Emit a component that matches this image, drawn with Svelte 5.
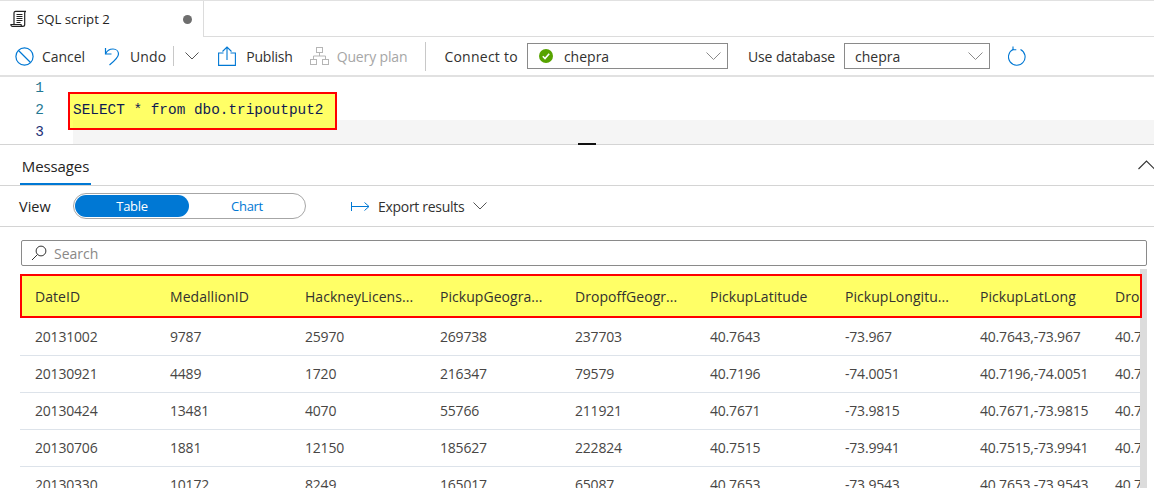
<script>
  const cols = ['DateID','MedallionID','HackneyLicens...','PickupGeogra...','DropoffGeogr...','PickupLatitude','PickupLongitu...','PickupLatLong','Dro'];
  const rows = [
    ['20131002','9787','25970','269738','237703','40.7643','-73.967','40.7643,-73.967','40.7'],
    ['20130921','4489','1720','216347','79579','40.7196','-74.0051','40.7196,-74.0051','40.7'],
    ['20130424','13481','4070','55766','211921','40.7671','-73.9815','40.7671,-73.9815','40.7'],
    ['20130706','1881','12150','185627','222824','40.7515','-73.9941','40.7515,-73.9941','40.7'],
    ['20130330','10172','8249','165017','65087','40.7653','-73.9543','40.7653,-73.9543','40.7']
  ];
</script>

<div class="page">
  <div class="tabbar">
    <div class="tab">
      <svg class="scroll" width="18" height="18" viewBox="0 0 18 18" fill="none" stroke="#222" stroke-width="1.200">
        <path d="M4 14V3c0-1 .6-1.6 1.6-1.6H16c-.8 0-1.3.6-1.3 1.6v11.5c0 1.1-.8 1.9-2 1.9H2.500c-1 0-1.600-.7-1.600-1.900H11c0 1 .5 1.900 1.700 1.900"/>
        <path d="M6.500 4.500h6M6.500 6.500h6M6.500 8.500h6M6.500 10.500h6M6.500 12.500h4"/>
      </svg>
      <span class="tabname">SQL script 2</span>
      <span class="dot"></span>
    </div>
  </div>

  <div class="toolbar">
    <button class="tool first">
      <svg width="19" height="19" viewBox="0 0 19 19" fill="none" stroke="#0078d4" stroke-width="1.200"><circle cx="9.500" cy="9.500" r="8.600"/><path d="M3.500 3.500l12 12"/></svg>
      <span>Cancel</span>
    </button>
    <button class="tool undo">
      <svg width="16" height="19" viewBox="0 0 16 19" fill="none" stroke="#0078d4" stroke-width="1.200"><path d="M1.500 1v6h6"/><path d="M1.500 7C3 3.500 6 2 9 2c3.500 0 5.500 2.500 5.500 5 0 3-3.500 6.500-9 11"/></svg>
      <span>Undo</span>
    </button>
    <span class="vsep small"></span>
    <svg class="chev" width="14" height="8" viewBox="0 0 14 8" fill="none" stroke="#555" stroke-width="1"><path d="M.5.500 7 7l6.500-6.500"/></svg>
    <button class="tool publish">
      <svg width="18" height="20" viewBox="0 0 18 20" fill="none" stroke="#0078d4" stroke-width="1.100"><path d="M5.500 7H.6v12.400h16.800V7h-4.900"/><path d="M9 14V1M4.500 5.500 9 1l4.500 4.500"/></svg>
      <span>Publish</span>
    </button>
    <button class="tool plan">
      <svg width="19" height="18" viewBox="0 0 19 18" fill="none" stroke="#b5b5b5" stroke-width="1"><rect x="6.500" y=".5" width="6" height="5"/><rect x=".5" y="12.500" width="6" height="5"/><rect x="12.500" y="12.500" width="6" height="5"/><path d="M9.500 5.500v3.500M3.500 12.500V9h12v3.500"/></svg>
      <span>Query plan</span>
    </button>
    <span class="vsep tall"></span>
    <span class="label connect">Connect to</span>
    <div class="select conn">
      <svg width="14" height="14" viewBox="0 0 14 14"><circle cx="7" cy="7" r="7" fill="#57a300"/><path d="M3.800 7.200 6 9.500l4.200-4.800" fill="none" stroke="#fff" stroke-width="1.600"/></svg>
      <span class="selval">chepra</span>
      <svg class="selchev" width="15" height="8" viewBox="0 0 15 8" fill="none" stroke="#8a8a8a" stroke-width="1"><path d="M.5.500 7.500 7.500l7-7"/></svg>
    </div>
    <span class="label usedb">Use database</span>
    <div class="select db">
      <span>chepra</span>
      <svg class="selchev" width="15" height="8" viewBox="0 0 15 8" fill="none" stroke="#8a8a8a" stroke-width="1"><path d="M.5.500 7.500 7.500l7-7"/></svg>
    </div>
    <svg class="refresh" width="18" height="20" viewBox="0 0 18 20" fill="none" stroke="#0078d4" stroke-width="1.100"><path d="M12.500 3.500A8.300 8.300 0 1 1 5.500 3.300"/><path d="M5 .5v3.300h3.300" /></svg>
  </div>

  <div class="editor">
    <div class="gutter">
      <div class="ln one">1</div>
      <div class="ln two">2</div>
      <div class="ln three">3</div>
    </div>
    <div class="code">
      <div class="cline"></div>
      <div class="cline stmt">SELECT * from dbo.tripoutput2</div>
      <div class="cur"></div>
    </div>
    <div class="mark"></div>
    <div class="grip"></div>
  </div>

  <div class="msgbar">
    <div class="msgtab">Messages</div>
    <svg class="up" width="17" height="10" viewBox="0 0 17 10" fill="none" stroke="#333" stroke-width="1.100"><path d="M.5 9 8.500 1l8 8"/></svg>
  </div>

  <div class="viewbar">
    <span class="viewlabel">View</span>
    <div class="toggle">
      <span class="opt on">Table</span>
      <span class="opt">Chart</span>
    </div>
    <svg class="exp" width="19" height="11" viewBox="0 0 19 11" fill="none" stroke="#0078d4" stroke-width="1"><path d="M.5 1v9M1 5.500h17M13.500 1.500l4.500 4-4.500 4"/></svg>
    <span class="export">Export results</span>
    <svg class="expchev" width="14" height="8" viewBox="0 0 14 8" fill="none" stroke="#555" stroke-width="1"><path d="M.5.500 7 7l6.500-6.500"/></svg>
  </div>

  <div class="results">
    <div class="search">
      <svg width="16" height="16" viewBox="0 0 16 16" fill="none" stroke="#333" stroke-width="1"><circle cx="10" cy="6" r="4.900"/><path d="M6.500 9.500 1 15"/></svg>
      <span>Search</span>
    </div>
    <div class="tablewrap">
      <div class="grid">
        <div class="row head">
          {#each cols as c}<div class="cell">{c}</div>{/each}
        </div>
        {#each rows as r}
          <div class="row">
            {#each r as v}<div class="cell">{v}</div>{/each}
          </div>
        {/each}
      </div>
      <div class="scrollbar"></div>
    </div>
  </div>
</div>

<style>
  :global(body) { margin: 0; background: #fff; }
  .page {
    width: 1154px; height: 488px; overflow: hidden; background: #fff;
    font-family: "Open Sans", "Noto Sans", sans-serif; font-size: 14px; color: #323130;
    display: flex; flex-direction: column;
  }
  button { background: none; border: 0; padding: 0; font: inherit; color: inherit; display: flex; align-items: center; }

  .tabbar { height: 37px; box-sizing: border-box; border-top: 1px solid #e1e1e1; border-bottom: 1px solid #dcdcdc; flex: none; }
  .tab { width: 204px; height: 36px; box-sizing: border-box; border-right: 1px solid #dcdcdc; background: #fff; display: flex; align-items: center; padding-left: 10px; }
  .tabname { margin-left: 9px; font-size: 13.200px; width: 146px; color: #252423; }
  .dot { width: 9px; height: 9px; border-radius: 50%; background: #6e6e6e; }

  .toolbar { height: 40px; box-sizing: border-box; border-bottom: 2px solid #e1e1e1; display: flex; align-items: center; flex: none; }
  .tool { gap: 8px; }
  .tool span { font-size: 14px; letter-spacing: -.05px; }
  .first { margin-left: 15px; }
  .undo { margin-left: 19px; gap: 10px; }
  .undo span { letter-spacing: .1px; }
  .vsep { width: 1px; background: #c8c8c8; display: block; }
  .vsep.small { height: 20px; margin-left: 7px; }
  .chev { margin-left: 11px; }
  .publish { margin-left: 19px; gap: 10px; }
  .publish span { letter-spacing: -.2px; }
  .plan { margin-left: 17px; gap: 8px; }
  .plan span { color: #a6a6a6; letter-spacing: -.15px; }
  .vsep.tall { height: 29px; margin-left: 18px; }
  .label { font-size: 14px; letter-spacing: -.1px; }
  .connect { margin-left: 18px; letter-spacing: .25px; }
  .select { height: 26px; box-sizing: border-box; border: 1px solid #8a8a8a; display: flex; align-items: center; position: relative; font-size: 14px; }
  .conn { width: 201px; margin-left: 9px; padding-left: 11px; }
  .selval { margin-left: 11px; }
  .selchev { position: absolute; right: 6px; top: 8px; }
  .usedb { margin-left: 20px; }
  .db { width: 146px; margin-left: 9px; padding-left: 10px; }
  .refresh { margin-left: 18px; }

  .editor { height: 68px; box-sizing: border-box; border-bottom: 1px solid #d4d4d4; position: relative; display: flex; flex: none; }
  .gutter { width: 73px; flex: none; font-family: "Liberation Mono", monospace; font-size: 14.400px; }
  .ln { height: 22px; line-height: 22px; text-align: right; padding-right: 29px; }
  .one { color: #237893; }
  .two { color: #237893; }
  .three { color: #1e2f77; }
  .code { flex: 1; font-family: "Liberation Mono", monospace; font-size: 14.400px; }
  .cline { height: 22px; line-height: 22px; white-space: pre; color: #0f1a52; }
  .stmt { position: relative; z-index: 2; }
  .cur { background: #f5f5f5; height: 24px; margin-top: -1px; }
  .mark {
    position: absolute; z-index: 1; left: 68px; top: 15px; width: 269px; height: 38px; box-sizing: border-box;
    border: 2px solid #f00; background: rgba(255, 255, 0, .6);
  }
  .grip { position: absolute; left: 578px; bottom: -1px; width: 18px; height: 2px; background: #111; }

  .msgbar { height: 41px; box-sizing: border-box; border-bottom: 1px solid #d4d4d4; position: relative; display: flex; flex: none; padding-left: 20px; }
  .msgtab { width: 71px; height: 40px; box-sizing: border-box; border-bottom: 2px solid #0078d4; text-align: center; line-height: 43px; font-size: 15px; letter-spacing: -.1px; color: #252423; }
  .up { position: absolute; right: -1px; top: 15px; }

  .viewbar { height: 41px; box-sizing: border-box; border-bottom: 1px solid #d4d4d4; display: flex; align-items: center; flex: none; padding-left: 19px; }
  .viewlabel { width: 54px; font-size: 14.500px; color: #252423; }
  .toggle { width: 233px; height: 26px; box-sizing: border-box; border: 1px solid #a6a6a6; border-radius: 13px; display: flex; padding: 1px; }
  .opt { width: 114px; height: 22px; border-radius: 11px; text-align: center; line-height: 22px; font-size: 13px; color: #0078d4; letter-spacing: -.3px; }
  .opt.on { background: #0078d4; color: #fff; }
  .opt:last-child { margin-left: 1px; }
  .exp { margin-left: 45px; }
  .export { margin-left: 8px; font-size: 14px; letter-spacing: -.3px; }
  .expchev { margin-left: 9px; }

  .results { padding: 13px 0 0 21px; flex: 1; display: flex; flex-direction: column; min-height: 0; }
  .search { width: 1126px; height: 26px; box-sizing: border-box; border: 1px solid #8a8a8a; border-radius: 2px; display: flex; align-items: center; padding-left: 9px; gap: 7px; flex: none; }
  .search span { color: #8a8886; font-size: 14px; }
  .tablewrap { position: relative; margin-top: 3px; margin-left: -1px; width: 1127px; flex: 1; min-height: 0; }
  .grid { width: 1122px; padding-top: 5px; overflow: hidden; }
  .scrollbar { position: absolute; left: 1120px; top: 0; bottom: 0; width: 7px; background: #dcdcdc; }
  .row { display: flex; height: 37px; box-sizing: border-box; border-bottom: 1px solid #dde3ea; padding: 0 0 2px 15px; align-items: center; white-space: nowrap; font-size: 14px; color: #484644; }
  .cell { width: 135px; flex: none; }
  .row .cell { letter-spacing: -.2px; }
  .row.head .cell { letter-spacing: .05px; }
  .row.head { position: relative; z-index: 1; width: 1122px; height: 44px; margin-bottom: 1px; border: 2px solid #f00; background: #ffff66; color: #323130; padding: 0 0 0 13px; overflow: hidden; }
</style>
